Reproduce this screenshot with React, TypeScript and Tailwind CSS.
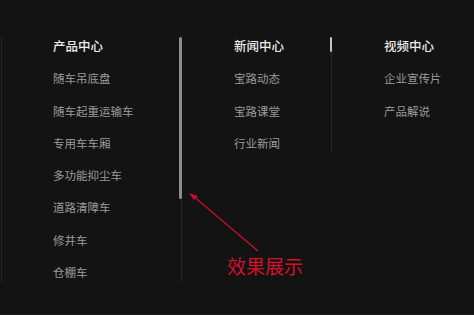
const columns = [
  {
    title: "产品中心",
    items: ["随车吊底盘", "随车起重运输车", "专用车车厢", "多功能抑尘车", "道路清障车", "修井车", "仓棚车"],
  },
  {
    title: "新闻中心",
    items: ["宝路动态", "宝路课堂", "行业新闻"],
  },
  {
    title: "视频中心",
    items: ["企业宣传片", "产品解说"],
  },
]

function MenuList({ title, items }: { title: string; items: string[] }) {
  return (
    <ul className="-mt-[7px]">
      <li className="h-[32.3px] leading-[32.3px] text-[12.5px] font-medium text-[#ececec]">{title}</li>
      {items.map((item) => (
        <li key={item} className="h-[32.3px] leading-[32.3px] text-[11.5px] text-[#9b9b9b]">
          {item}
        </li>
      ))}
    </ul>
  )
}

export default function App() {
  return (
    <div
      className="relative w-[474px] h-[315px] overflow-hidden bg-[#131313] border-b border-[#1c1c1c]"
      style={{ fontFamily: '"Noto Sans CJK SC", "Noto Sans", sans-serif' }}
    >
      <div className="flex items-start pt-[37px] pl-[1px]">
        {/* 产品中心 */}
        <div className="relative w-[181px] h-[245px] pl-[51px] border-l border-r border-[#262626]">
          <MenuList {...columns[0]} />
          <div className="absolute -right-[1px] top-0 w-[3px] h-[162px] rounded-full bg-[#8d8d8d]" />
        </div>

        {/* 新闻中心 */}
        <div className="relative w-[150px] h-[115px] pl-[52px] border-r border-[#262626]">
          <MenuList {...columns[1]} />
          <div className="absolute -right-[1px] top-0 w-[2px] h-[15px] rounded-full bg-[#c4c4c4]" />
        </div>

        {/* 视频中心 */}
        <div className="pl-[52px]">
          <MenuList {...columns[2]} />
        </div>
      </div>

      {/* annotation */}
      <svg className="absolute left-0 top-0" width="474" height="315" viewBox="0 0 474 315">
        <line x1="258" y1="251" x2="192" y2="195" stroke="#c8102e" strokeWidth="1.2" />
        <path d="M189 193 L198 196 L194 200 Z" fill="#c8102e" />
      </svg>
      <div className="absolute left-[227px] top-[252px] text-[19px] leading-[28px] text-[#d4102c]">效果展示</div>
    </div>
  )
}
